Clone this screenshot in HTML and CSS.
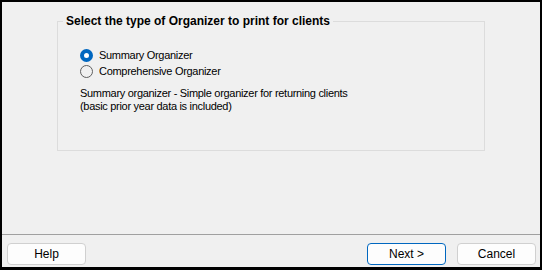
FILE: index.html
```html
<!DOCTYPE html>
<html lang="en">
  <head>
    <meta charset="UTF-8" />
    <title>Organizer</title>
    <link rel="stylesheet" href="styles.css">
  </head>
  <body>
    <div class="window">
      <div class="content">
        <fieldset class="group">
          <legend>Select the type of Organizer to print for clients</legend>
          <div class="options">
            <label class="option">
              <span class="radio checked"></span>
              Summary Organizer
            </label>
            <label class="option">
              <span class="radio"></span>
              Comprehensive Organizer
            </label>
          </div>
          <p class="desc">
            Summary organizer - Simple organizer for returning clients<br />
            (basic prior year data is included)
          </p>
        </fieldset>
      </div>

      <div class="footer">
        <button class="btn">Help</button>
        <div class="spacer"></div>
        <button class="btn primary">Next &gt;</button>
        <button class="btn">Cancel</button>
      </div>
    </div>
  </body>
</html>
```

FILE: styles.css
```css
* {
  margin: 0;
  padding: 0;
  box-sizing: border-box;
}

html,
body {
  width: 542px;
  height: 270px;
  overflow: hidden;
}

body {
  font-family: "Liberation Sans", Arial, sans-serif;
  font-size: 11px;
  letter-spacing: -0.3px;
  color: #000;
  background: #000;
}

.window {
  height: 270px;
  border: 2px solid #000;
  border-bottom-width: 3px;
  background: #f0f0f0;
  display: flex;
  flex-direction: column;
}

.content {
  flex: 1;
  padding: 12px 0 0 55px;
}

.group {
  width: 428px;
  height: 137px;
  border: 1px solid #dcdcdc;
  padding: 0 0 0 22px;
}

.group legend {
  margin-left: -17px;
  padding: 0 3px;
  font-size: 12px;
  font-weight: bold;
  letter-spacing: 0;
}

.options {
  margin-top: 20px;
  display: flex;
  flex-direction: column;
  gap: 2px;
}

.option {
  display: flex;
  align-items: center;
  gap: 6px;
  height: 14px;
  line-height: 14px;
}

.radio {
  width: 13px;
  height: 13px;
  flex-shrink: 0;
  border-radius: 50%;
  border: 1px solid #5f5f5f;
  background: #f0f0f0;
}

.radio.checked {
  border: 4px solid #0067c0;
  background: #fff;
}

.desc {
  margin-top: 9px;
  line-height: 13px;
}

.footer {
  height: 33px;
  border-top: 1px solid #a0a0a0;
  display: flex;
  align-items: flex-start;
  gap: 11px;
  padding: 8px 4px 0 5px;
}

.spacer {
  flex: 1;
}

.btn {
  width: 79px;
  height: 22px;
  font-family: inherit;
  font-size: 12px;
  letter-spacing: 0;
  background: #fdfdfd;
  border: 1px solid #d0d0d0;
  border-radius: 4px;
  color: #000;
}

.btn.primary {
  border-color: #0067c0;
}
```
